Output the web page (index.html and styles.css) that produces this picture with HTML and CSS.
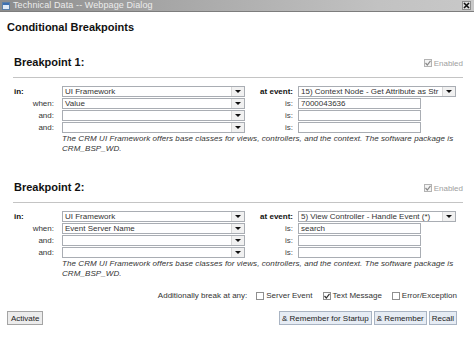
FILE: index.html
```html
<!DOCTYPE html>
<html lang="en">
<head>
<meta charset="UTF-8">
<title>Technical Data -- Webpage Dialog</title>
<link rel="stylesheet" href="styles.css">
</head>
<body>

<div class="titlebar">
  <svg class="appicon" width="8" height="8" viewBox="0 0 8 8"><rect x="0.5" y="0.5" width="7" height="7" fill="#dfe9f5" stroke="#5b7fa8"/><rect x="1" y="1" width="6" height="2" fill="#3d6fb0"/></svg>
  <span class="ttl">Technical Data -- Webpage Dialog</span>
  <span class="close"><svg width="7" height="7" viewBox="0 0 7 7"><path d="M1 1L6 6M6 1L1 6" stroke="#111" stroke-width="1.6"/></svg></span>
</div>

<h1>Conditional Breakpoints</h1>

<section class="bp">
  <div class="bphead">
    <h2>Breakpoint 1:</h2>
    <span class="enabled"><span class="cb dis"><svg width="6" height="6" viewBox="0 0 6 6"><path d="M0.5 3L2.3 5L5.5 0.8" fill="none" stroke="#8a8a8a" stroke-width="1.2"/></svg></span>Enabled</span>
  </div>
  <div class="grid">
    <b class="lbl first">in:</b>
    <div class="sel"><span>UI Framework</span><i></i></div>
    <b class="lbl2">at event:</b>
    <div class="sel"><span>15) Context Node - Get Attribute as Str</span><i></i></div>

    <span class="lbl">when:</span>
    <div class="sel"><span>Value</span><i></i></div>
    <span class="lbl2">is:</span>
    <div class="inp">7000043636</div>

    <span class="lbl">and:</span>
    <div class="sel"><span></span><i></i></div>
    <span class="lbl2">is:</span>
    <div class="inp"></div>

    <span class="lbl">and:</span>
    <div class="sel"><span></span><i></i></div>
    <span class="lbl2">is:</span>
    <div class="inp"></div>

    <p class="help">The CRM UI Framework offers base classes for views, controllers, and the context. The software package is CRM_BSP_WD.</p>
  </div>
</section>

<section class="bp second">
  <div class="bphead">
    <h2>Breakpoint 2:</h2>
    <span class="enabled"><span class="cb dis"><svg width="6" height="6" viewBox="0 0 6 6"><path d="M0.5 3L2.3 5L5.5 0.8" fill="none" stroke="#8a8a8a" stroke-width="1.2"/></svg></span>Enabled</span>
  </div>
  <div class="grid">
    <b class="lbl first">in:</b>
    <div class="sel"><span>UI Framework</span><i></i></div>
    <b class="lbl2">at event:</b>
    <div class="sel"><span>5) View Controller - Handle Event (*)</span><i></i></div>

    <span class="lbl">when:</span>
    <div class="sel"><span>Event Server Name</span><i></i></div>
    <span class="lbl2">is:</span>
    <div class="inp">search</div>

    <span class="lbl">and:</span>
    <div class="sel"><span></span><i></i></div>
    <span class="lbl2">is:</span>
    <div class="inp"></div>

    <span class="lbl">and:</span>
    <div class="sel"><span></span><i></i></div>
    <span class="lbl2">is:</span>
    <div class="inp"></div>

    <p class="help">The CRM UI Framework offers base classes for views, controllers, and the context. The software package is CRM_BSP_WD.</p>
  </div>
</section>

<div class="extra">
  <span class="lead">Additionally break at any:</span>
  <span class="opt"><span class="cb"></span>Server Event</span>
  <span class="opt"><span class="cb"><svg width="6" height="6" viewBox="0 0 6 6"><path d="M0.5 3L2.3 5L5.5 0.8" fill="none" stroke="#333" stroke-width="1.2"/></svg></span>Text Message</span>
  <span class="opt"><span class="cb"></span>Error/Exception</span>
</div>

<div class="buttons">
  <button class="plain">Activate</button>
  <div class="right">
    <button>&amp; Remember for Startup</button>
    <button>&amp; Remember</button>
    <button>Recall</button>
  </div>
</div>

</body>
</html>
```

FILE: styles.css
```css
*{box-sizing:border-box}
body{margin:0;width:474px;height:338px;overflow:hidden;font-family:"Liberation Sans",Arial,sans-serif;font-size:8px;color:#222;background:#fff}

.titlebar{height:12px;display:flex;align-items:center;gap:3px;padding:0 3px 0 2px;background:linear-gradient(90deg,#8c8c8c,#a6a6a6 35%,#c2c2c2 80%,#c8c8c8);border-bottom:1px solid #7d7d7d;color:#ececec;font-size:9px;line-height:11px}
.appicon{flex:none}
.ttl{flex:1;white-space:nowrap;letter-spacing:0.1px}
.close{width:9px;height:9px;display:flex;align-items:center;justify-content:center;background:#dcdcdc;border:1px solid #8d8d8d}

h1{margin:9px 0 0;padding-left:7px;font-size:11px;line-height:13px;font-weight:bold;color:#111}

.bp{margin:22px 11px 0 13px}
.bp.second{margin-top:27px}
.bphead{display:flex;align-items:center;justify-content:space-between;height:22px;padding:0 0 8px 1px;border-bottom:1px solid #c4c4c4}
h2{margin:0;font-size:11px;line-height:13px;font-weight:bold;color:#111}
.enabled{display:flex;align-items:center;gap:2px;color:#a0a0a0;margin-top:1px}

.cb{width:8px;height:8px;border:1px solid #8f8f8f;background:#fff;display:inline-flex;align-items:center;justify-content:center;flex:none}
.cb.dis{border-color:#b3b3b3;background:#f4f4f4}

.grid{display:grid;grid-template-columns:48px 183px 53px 158px;grid-template-rows:repeat(4,11px) auto;row-gap:1px;margin:8px 0 0 1px;line-height:11px}
.lbl{text-align:right;padding-right:8px;color:#333}
.lbl.first{text-align:left;padding-right:0;color:#111}
.lbl2{text-align:right;padding-right:5px;color:#444}
b.lbl2{color:#111}

.sel,.inp{height:11px;border:1px solid #a9adb3;background:#fff;color:#333;line-height:9px;white-space:nowrap;overflow:hidden}
.sel{display:flex}
.sel span{flex:1;padding-left:2px;overflow:hidden}
.sel i{width:13px;flex:none;background:#f1f1f1;border-left:1px solid #d6d6d6;display:flex;align-items:center;justify-content:center}
.sel i::before{content:"";border-left:3px solid transparent;border-right:3px solid transparent;border-top:3px solid #111}
.inp{width:123px;padding-left:2px}

.help{grid-column:2 / 5;margin:0;font-style:italic;line-height:10px;color:#333;letter-spacing:0.08px}

.extra{display:flex;align-items:center;justify-content:flex-end;gap:10px;margin:12px 17px 0 0;line-height:10px;color:#333}
.lead{margin-right:-1px}
.opt{display:flex;align-items:center;gap:2px}

.buttons{display:flex;justify-content:space-between;margin:10px 17px 0 7px}
.right{display:flex;gap:2px}
button{height:14px;margin:0;padding:0 2px;font:8px "Liberation Sans",Arial,sans-serif;color:#222;background:#e6ecf4;border:1px solid #a9b4c3;border-radius:0}
button.plain{padding:0 3px;background:#ececec;border-color:#a4a4a4}
```
